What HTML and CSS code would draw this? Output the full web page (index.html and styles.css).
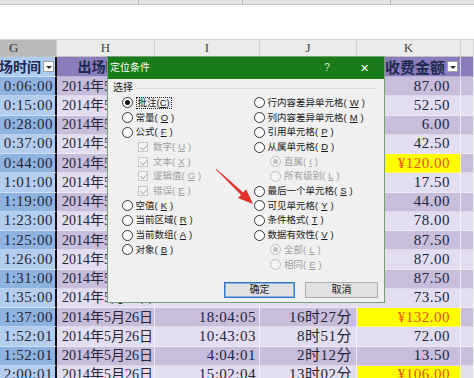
FILE: index.html
```html
<!DOCTYPE html>
<html lang="zh-CN">
<head>
    <meta charset="UTF-8">
    <title>定位条件</title>
    <link rel="stylesheet" href="styles.css">
</head>
<body>
    <div class="topbar"><span class="seg1"></span><span class="seg2"></span><span class="seg3"></span></div>
    <div class="blank"></div>

    <div class="colheads">
        <div class="ch sel first">G</div>
        <div class="ch">H</div>
        <div class="ch">I</div>
        <div class="ch">J</div>
        <div class="ch">K</div>
        <div class="ch"></div>
    </div>

    <div class="sheet">
        <div class="row head">
            <div class="c g">入场时间<span class="dd"></span></div>
            <div class="c p mid">出场时间</div>
            <div class="c p"></div>
            <div class="c p"></div>
            <div class="c p k">收费金额<span class="dd"></span></div>
            <div class="c p"></div>
        </div>
        <div class="row dark"><div class="c g">0:06:00</div><div class="c p h">2014年5月26日</div><div class="c p"></div><div class="c p"></div><div class="c p k">87.00</div><div class="c p"></div></div>
        <div class="row"><div class="c g">0:15:00</div><div class="c p h">2014年5月26日</div><div class="c p"></div><div class="c p"></div><div class="c p k">52.50</div><div class="c p"></div></div>
        <div class="row dark"><div class="c g">0:28:00</div><div class="c p h">2014年5月26日</div><div class="c p"></div><div class="c p"></div><div class="c p k">6.00</div><div class="c p"></div></div>
        <div class="row"><div class="c g">0:37:00</div><div class="c p h">2014年5月26日</div><div class="c p"></div><div class="c p"></div><div class="c p k">42.50</div><div class="c p"></div></div>
        <div class="row dark"><div class="c g">0:44:00</div><div class="c p h">2014年5月26日</div><div class="c p"></div><div class="c p"></div><div class="c p k y">¥120.00</div><div class="c p"></div></div>
        <div class="row"><div class="c g">1:01:00</div><div class="c p h">2014年5月26日</div><div class="c p"></div><div class="c p"></div><div class="c p k">17.50</div><div class="c p"></div></div>
        <div class="row dark"><div class="c g">1:19:00</div><div class="c p h">2014年5月26日</div><div class="c p"></div><div class="c p"></div><div class="c p k">44.00</div><div class="c p"></div></div>
        <div class="row"><div class="c g">1:23:00</div><div class="c p h">2014年5月26日</div><div class="c p"></div><div class="c p"></div><div class="c p k">78.00</div><div class="c p"></div></div>
        <div class="row dark"><div class="c g">1:25:00</div><div class="c p h">2014年5月26日</div><div class="c p"></div><div class="c p"></div><div class="c p k">87.50</div><div class="c p"></div></div>
        <div class="row"><div class="c g">1:26:00</div><div class="c p h">2014年5月26日</div><div class="c p"></div><div class="c p"></div><div class="c p k">87.00</div><div class="c p"></div></div>
        <div class="row dark"><div class="c g">1:31:00</div><div class="c p h">2014年5月26日</div><div class="c p"></div><div class="c p"></div><div class="c p k">87.50</div><div class="c p"></div></div>
        <div class="row"><div class="c g">1:35:00</div><div class="c p h">2014年5月26日</div><div class="c p"></div><div class="c p"></div><div class="c p k">73.50</div><div class="c p"></div></div>
        <div class="row dark"><div class="c g">1:37:00</div><div class="c p h">2014年5月26日</div><div class="c p">18:04:05</div><div class="c p j">16时27分</div><div class="c p k y">¥132.00</div><div class="c p"></div></div>
        <div class="row"><div class="c g">1:52:01</div><div class="c p h">2014年5月26日</div><div class="c p">10:43:03</div><div class="c p j">8时51分</div><div class="c p k">72.00</div><div class="c p"></div></div>
        <div class="row dark"><div class="c g">1:52:01</div><div class="c p h">2014年5月26日</div><div class="c p">4:04:01</div><div class="c p j">2时12分</div><div class="c p k">13.50</div><div class="c p"></div></div>
        <div class="row"><div class="c g">2:00:01</div><div class="c p h">2014年5月26日</div><div class="c p">15:02:04</div><div class="c p j">13时02分</div><div class="c p k y">¥106.00</div><div class="c p"></div></div>
    </div>

    <div class="dialog">
        <div class="title">
            <span class="t-text">定位条件</span>
            <span class="t-btn">?</span>
            <span class="t-btn close">✕</span>
        </div>
        <div class="body">
            <div class="group-head">选择</div>
            <div class="opts">
                <div class="col left">
                    <div class="opt"><span class="rb on"></span><span class="focus">批注(<u>C</u>)</span></div>
                    <div class="opt"><span class="rb"></span>常量(<u>O</u>)</div>
                    <div class="opt"><span class="rb"></span>公式(<u>F</u>)</div>
                    <div class="opt sub off"><span class="cb"></span>数字(<u>U</u>)</div>
                    <div class="opt sub off"><span class="cb"></span>文本(<u>X</u>)</div>
                    <div class="opt sub off"><span class="cb"></span>逻辑值(<u>G</u>)</div>
                    <div class="opt sub off"><span class="cb"></span>错误(<u>E</u>)</div>
                    <div class="opt"><span class="rb"></span>空值(<u>K</u>)</div>
                    <div class="opt"><span class="rb"></span>当前区域(<u>R</u>)</div>
                    <div class="opt"><span class="rb"></span>当前数组(<u>A</u>)</div>
                    <div class="opt"><span class="rb"></span>对象(<u>B</u>)</div>
                </div>
                <div class="col right">
                    <div class="opt"><span class="rb"></span>行内容差异单元格(<u>W</u>)</div>
                    <div class="opt"><span class="rb"></span>列内容差异单元格(<u>M</u>)</div>
                    <div class="opt"><span class="rb"></span>引用单元格(<u>P</u>)</div>
                    <div class="opt"><span class="rb"></span>从属单元格(<u>D</u>)</div>
                    <div class="opt sub off"><span class="rb on"></span>直属(<u>I</u>)</div>
                    <div class="opt sub off"><span class="rb"></span>所有级别(<u>L</u>)</div>
                    <div class="opt"><span class="rb"></span>最后一个单元格(<u>S</u>)</div>
                    <div class="opt"><span class="rb"></span>可见单元格(<u>Y</u>)</div>
                    <div class="opt"><span class="rb"></span>条件格式(<u>T</u>)</div>
                    <div class="opt"><span class="rb"></span>数据有效性(<u>V</u>)</div>
                    <div class="opt sub off"><span class="rb on"></span>全部(<u>L</u>)</div>
                    <div class="opt sub off"><span class="rb"></span>相同(<u>E</u>)</div>
                </div>
            </div>
            <div class="btns">
                <div class="btn def">确定</div>
                <div class="btn cancel">取消</div>
            </div>
        </div>
    </div>

    <svg class="arrow" width="50" height="50" viewBox="0 0 50 50">
        <polygon points="6.3,8.7 33.2,32.5 36.2,29.3 43,44 28,38.1 31,34.9 5.7,9.3" fill="#e5322b"/>
    </svg>
</body>
</html>
```

FILE: styles.css
```css
* { margin: 0; padding: 0; box-sizing: border-box; }
body { width: 474px; height: 378px; overflow: hidden; position: relative; background: #fff; font-family: "Liberation Serif", "Noto Sans CJK SC", serif; }

.topbar { display: flex; height: 5px; background: #e4e4e4; border-bottom: 1px solid #c8c8c8; }
.topbar span { border-right: 1px solid #b4b4b4; }
.seg1 { width: 139px; }
.seg2 { width: 104px; }
.seg3 { width: 148px; }
.blank { height: 34px; }

.colheads { display: grid; grid-template-columns: 57px 98px 105px 97px 104px 1fr; height: 18px; background: #ebebeb; border-top: 1px solid #cfcfcf; border-bottom: 1px solid #c2c2c2; }
.ch { display: flex; align-items: center; justify-content: center; border-right: 1px solid #d2d2d2; font-size: 13px; line-height: 16px; color: #444; }
.ch.sel { background: #bababa; color: #333; }
.ch.first { justify-content: flex-start; padding-left: 9px; }

.row { display: grid; grid-template-columns: 57px 98px 105px 97px 104px 1fr; height: 19.25px; }
.row.head { height: 20px; }
.c { display: flex; align-items: center; justify-content: flex-end; padding-right: 3px; font-size: 15px; line-height: 17px; letter-spacing: 0.5px; color: #23263a; white-space: nowrap; overflow: hidden; border-right: 1px solid rgba(255, 255, 255, 0.7); border-bottom: 1px solid rgba(255, 255, 255, 0.4); }
.c.g { background: #b3cdee; border-right: 2px solid #111; padding-right: 2px; }
.c.p { background: #e2ddef; }
.row.dark .c.g { background: #8fb3e1; }
.row.dark .c.p { background: #c8bddb; }
.c.h { justify-content: flex-start; padding-left: 5px; font-size: 14px; letter-spacing: 0; }
.c.j { padding-right: 4px; }
.c.k { padding-right: 10px; }
.c.y, .row.dark .c.y { background: #ffff00; color: #f0501c; }

.row.head .c { font-family: "Noto Sans CJK SC", sans-serif; font-weight: bold; font-size: 14px; letter-spacing: 0; color: #1d2a4f; }
.row.head .c.g { background: #aecbf0; padding-right: 1px; }
.row.head .c.p { background: #8b7cbd; }
.row.head .c.mid { justify-content: center; padding: 0; }
.row.head .c.k { padding-right: 2px; font-size: 15px; }
.dd { flex: none; width: 11px; height: 11px; margin-left: 2px; background: #fff; border: 1px solid #a0a0a0; display: flex; align-items: center; justify-content: center; }
.dd::after { content: ""; border-top: 3px solid #333; border-left: 3px solid transparent; border-right: 3px solid transparent; margin-top: 1px; }

.dialog { position: absolute; left: 107px; top: 56px; width: 278px; height: 247px; background: #f0f0f0; border: 1px solid #74a274; display: flex; flex-direction: column; font-family: "Liberation Sans", "Noto Sans CJK SC", sans-serif; font-size: 9.5px; line-height: 12px; color: #1a1a1a; }
.title { height: 22px; flex: none; background: #1a7b1a; color: #fff; display: flex; align-items: center; padding-left: 2px; font-size: 10px; }
.t-text { flex: 1; }
.t-btn { width: 20px; text-align: center; font-size: 10px; color: #d8ecd8; }
.t-btn.close { margin-left: 17px; margin-right: 10px; font-size: 11px; color: #fff; }

.body { flex: 1; display: flex; flex-direction: column; padding-top: 2px; }
.group-head { display: flex; align-items: center; height: 14px; padding-left: 5px; margin-right: 7px; font-size: 10px; }
.group-head::after { content: ""; flex: 1; margin-left: 3px; border-top: 1px solid #dadada; }
.opts { display: flex; padding-top: 0.65px; }
.col { display: flex; flex-direction: column; }
.col.left { width: 145.5px; padding-left: 13.5px; }
.opt { height: 14.7px; display: flex; align-items: center; gap: 3px; white-space: nowrap; }
.opt.sub { padding-left: 16.5px; }
.opt.sub .cb { margin-right: 2px; }
.opt.off { color: #9e9e9e; }

.rb { flex: none; width: 11px; height: 11px; border-radius: 50%; border: 1px solid #333; background: #fff; display: flex; align-items: center; justify-content: center; }
.rb.on::after { content: ""; width: 5px; height: 5px; border-radius: 50%; background: #111; }
.off .rb { border-color: #bdbdbd; background: #f5f5f5; }
.off .rb.on::after { background: #c2c2c2; }
.cb { flex: none; width: 10px; height: 10px; border: 1px solid #c6c6c6; background: #f5f5f5; position: relative; }
.cb::after { content: ""; position: absolute; left: 2.5px; top: 0; width: 3px; height: 6px; border: solid #b2b2b2; border-width: 0 1.5px 1.5px 0; transform: rotate(45deg); }
.focus { border: 1px dotted #222; padding: 0 1px; line-height: 10px; }

.btns { margin-top: auto; display: flex; justify-content: flex-end; gap: 10px; padding: 0 6px 4px 0; }
.btn { height: 16px; display: flex; align-items: center; justify-content: center; background: #e1e1e1; border: 1px solid #adadad; font-size: 10px; }
.btn.def { width: 71px; border-color: #2f79c4; box-shadow: inset 0 0 0 1px #86b4e2; }
.btn.cancel { width: 73px; }

.arrow { position: absolute; left: 210px; top: 160px; pointer-events: none; }
```
